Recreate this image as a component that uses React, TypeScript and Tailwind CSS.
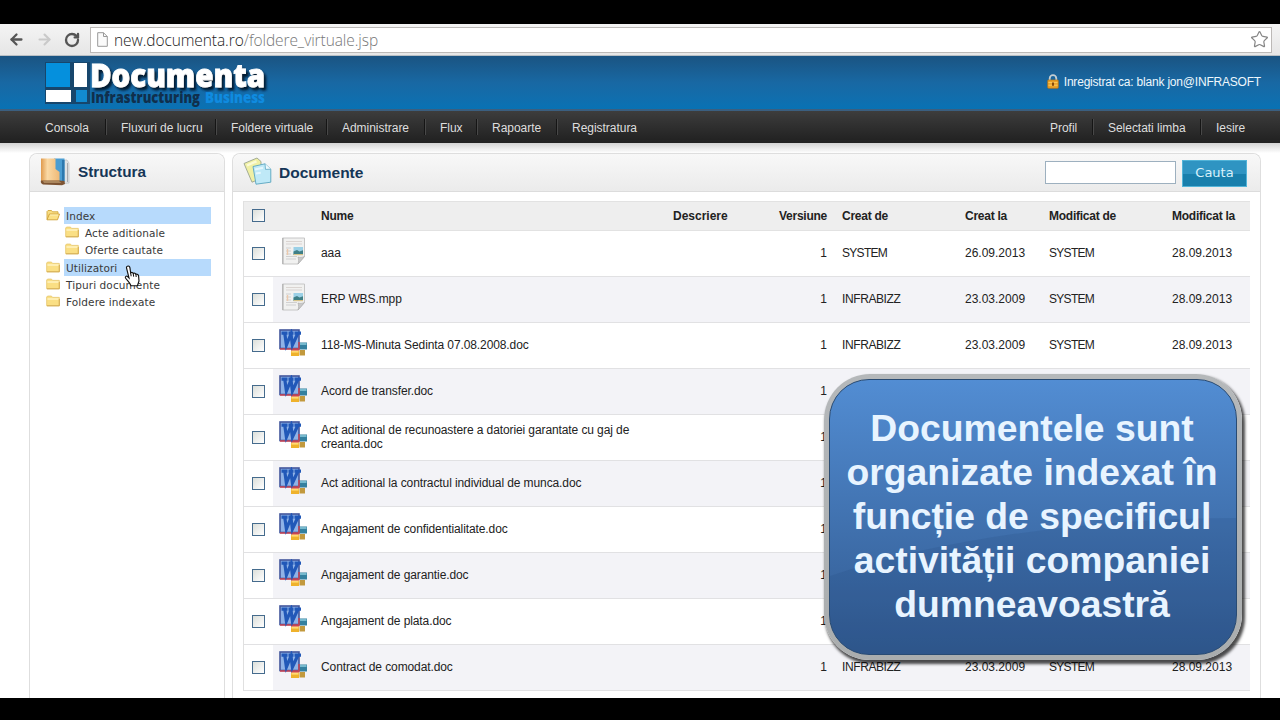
import { ArrowLeft, ArrowRight, RotateCw, Star } from 'lucide-react';

type Row = {
    name: string;
    type: 'page' | 'word';
    owner?: string;
    created?: string;
    modifiedBy?: string;
    modified?: string;
};

const rows: Row[] = [
    { name: 'aaa', type: 'page', owner: 'SYSTEM', created: '26.09.2013', modifiedBy: 'SYSTEM', modified: '28.09.2013' },
    { name: 'ERP WBS.mpp', type: 'page', owner: 'INFRABIZZ', created: '23.03.2009', modifiedBy: 'SYSTEM', modified: '28.09.2013' },
    { name: '118-MS-Minuta Sedinta 07.08.2008.doc', type: 'word', owner: 'INFRABIZZ', created: '23.03.2009', modifiedBy: 'SYSTEM', modified: '28.09.2013' },
    { name: 'Acord de transfer.doc', type: 'word' },
    { name: 'Act aditional de recunoastere a datoriei garantate cu gaj de creanta.doc', type: 'word' },
    { name: 'Act aditional la contractul individual de munca.doc', type: 'word' },
    { name: 'Angajament de confidentialitate.doc', type: 'word' },
    { name: 'Angajament de garantie.doc', type: 'word' },
    { name: 'Angajament de plata.doc', type: 'word' },
    { name: 'Contract de comodat.doc', type: 'word', owner: 'INFRABIZZ', created: '23.03.2009', modifiedBy: 'SYSTEM', modified: '28.09.2013' },
];

const tree = [
    { label: 'Index', open: true, active: true },
    { label: 'Acte aditionale', child: true },
    { label: 'Oferte cautate', child: true },
    { label: 'Utilizatori', active: true },
    { label: 'Tipuri documente' },
    { label: 'Foldere indexate' },
];

const menu = [
    { label: 'Consola', width: 'w-[76px]' },
    { label: 'Fluxuri de lucru', width: 'w-[110px]' },
    { label: 'Foldere virtuale', width: 'w-[111px]' },
    { label: 'Administrare', width: 'w-[98px]' },
    { label: 'Flux', width: 'w-[52px]' },
    { label: 'Rapoarte', width: 'w-[80px]' },
    { label: 'Registratura', width: 'w-[80px]' },
];

const userMenu = [
    { label: 'Profil', width: 'w-[58px]' },
    { label: 'Selectati limba', width: 'w-[108px]' },
    { label: 'Iesire', width: 'w-[45px]' },
];

const columns = 'grid grid-cols-[29px_48px_352px_90px_79px_123px_84px_123px_78px] items-center';

const Logo = () => (
    <svg width="232" height="54" viewBox="0 0 232 54" className="overflow-visible">
        <defs>
            <filter id="logo-shadow" x="-10%" y="-20%" width="125%" height="160%">
                <feDropShadow dx="2.5" dy="3" stdDeviation="1.3" floodColor="#06182b" floodOpacity="0.95" />
            </filter>
        </defs>
        <rect x="0" y="6" width="45" height="42" fill="#17466c" />
        <rect x="1" y="7" width="24" height="24" fill="#0590dd" />
        <rect x="29" y="7" width="13" height="24" fill="#fff" />
        <rect x="1" y="34" width="25" height="12" fill="#fff" />
        <rect x="31" y="34" width="11" height="12" fill="#128bd0" />
        <g fontFamily="'Open Sans', sans-serif" fontWeight="800">
            <text x="46" y="47" fontSize="15" fill="#102f4c" textLength="109" lengthAdjust="spacingAndGlyphs">Infrastructuring</text>
            <text x="160" y="47" fontSize="15" fill="#0f8be0" textLength="60" lengthAdjust="spacingAndGlyphs">Business</text>
            <text x="45" y="30.500" fontSize="31" fill="#fff" stroke="#fff" strokeWidth="0.8" textLength="175" lengthAdjust="spacingAndGlyphs" filter="url(#logo-shadow)">Documenta</text>
        </g>
    </svg>
);

const Lock = () => (
    <svg width="12" height="15" viewBox="0 0 12 15">
        <path d="M2.7 7V4.4a3.3 3.3 0 0 1 6.6 0V7" fill="none" stroke="#c3cdd2" strokeWidth="1.8" />
        <rect x="0.7" y="6" width="10.6" height="8.3" rx="0.8" fill="#e9a128" stroke="#b97413" strokeWidth="0.7" />
        <path d="M1.4 8.6h9.2M1.4 11.2h9.2" stroke="#ffd36b" strokeWidth="0.8" />
        <path d="M5.1 8.4h1.8v3.4H5.1z" fill="#7a3f08" />
    </svg>
);

const FolderIcon = ({ open }: { open?: boolean }) => (
    <svg width="14" height="12" viewBox="0 0 14 12" className="mb-0.5 shrink-0">
        {open ? (
            <>
                <path d="M1 10.5V2.5l1-1h3.5l1 1.3H12v2" fill="#f7dd83" stroke="#d3a73c" strokeWidth="0.9" />
                <path d="M1 10.8 3.4 5h10.1l-2 5.8z" fill="#fbe084" stroke="#cf9f35" strokeWidth="0.9" />
                <path d="M4 6h8.3" stroke="#fff6c9" strokeWidth="0.8" />
            </>
        ) : (
            <>
                <path d="M0.7 10.8V2l.8-.9h4l1 1.3h6.8v8.4z" fill="#fadf84" stroke="#e8cb74" strokeWidth="0.9" />
                <path d="M1.4 4h11.2" stroke="#fff5c6" strokeWidth="1.4" />
                <path d="M1 10.8h12.3V4" fill="none" stroke="#d3a84a" strokeWidth="0.9" />
            </>
        )}
    </svg>
);

const StructureIcon = () => (
    <svg width="30" height="30" viewBox="0 0 30 30">
        <defs>
            <linearGradient id="cover" x1="0" x2="1">
                <stop offset="0" stopColor="#e09a4c" />
                <stop offset="0.35" stopColor="#fad9a5" />
                <stop offset="1" stopColor="#efb976" />
            </linearGradient>
        </defs>
        <path d="M20 3h7l2 3v20l-9 1z" fill="#dfe3e6" stroke="#b5b9bc" strokeWidth="0.6" />
        <path d="M27.500 6v19" stroke="#9a9c9e" strokeWidth="0.8" />
        <path d="M14 1.500h10.500v23h-5l-5.500-1z" fill="#4a9dd2" />
        <path d="M22 3h2.500v21.500H22z" fill="#2c78ae" />
        <path d="M1 1.500h14.500V12l4 3v9H1z" fill="url(#cover)" />
        <path d="M1 23.500h18.500l5 .5.500 3-3 1.300L3 27.500c-2-.6-2.600-2.600-2-4z" fill="#7d5433" />
        <path d="M3 24.500h16l2.500 1H4z" fill="#d9b98a" />
    </svg>
);

const DocumentsIcon = () => (
    <svg width="29" height="28" viewBox="0 0 29 28">
        <path d="M1 6.5 14 1l4 3.500 0 17-9 3.700z" fill="#f0f0a4" stroke="#9aa48e" strokeWidth="0.9" />
        <path d="m4 8.500 9.500-4.200" stroke="#fbfbd7" strokeWidth="2.4" />
        <path d="M10 9.500 22 6.800l5.800 5.400v13l-14.800 2z" fill="#bfe9f7" stroke="#5aa5c0" strokeWidth="0.9" />
        <path d="m22 6.800.5 5.600 5.300-.2" fill="#eefafe" stroke="#5aa5c0" strokeWidth="0.8" />
        <path d="m12 12.500 8-1.800M12.800 16.500l5-.8" stroke="#e5f7fd" strokeWidth="2" />
    </svg>
);

const PageIcon = () => (
    <svg width="26" height="28" viewBox="0 0 26 28">
        <path d="M1.5 1h22v18.5L17 27H1.5z" fill="#f1f1f0" stroke="#c6c6c6" />
        <path d="M2 1v26" stroke="#acacac" strokeWidth="1" />
        <path d="M5 4.500h16M5 7h16" stroke="#dad4d1" strokeWidth="1.2" />
        <path d="M5 11h5m-5 3h5m-5 3h5m-5 5h10m-10-2.500h11" stroke="#d0d0d0" strokeWidth="1.1" />
        <path d="M6.500 12v6" stroke="#ecc9ac" strokeWidth="1.4" />
        <rect x="12.5" y="10" width="9.5" height="8" fill="#9bd0e6" />
        <path d="M12.5 14.5 16 13l2.5 1.4 3.5-1.2V18h-9.5z" fill="#3f7f86" />
        <path d="M12.500 17H22v1.200h-9.500z" fill="#d8c48a" />
        <path d="M17 27c.8-2.300.8-4.500 0-7 2 .7 4.300.4 6.500-.5z" fill="#c9c9c9" stroke="#a9a9a9" strokeWidth="0.6" />
    </svg>
);

const WordIcon = () => (
    <svg width="29" height="29" viewBox="0 0 29 29">
        <path d="M20 13.500h8v7h-8z" fill="#34809f" />
        <path d="M20.500 14h7v2h-7z" fill="#76b9ce" />
        <path d="M12 21.500h8V27h-8z" fill="#efb22c" />
        <path d="M20.500 21h5.500v5.500h-5.500z" fill="#c2993d" />
        <path d="M12.500 22h7v1.600h-7z" fill="#ffdb73" />
        <path d="M12 15h8v6.500h-8z" fill="#e0493e" />
        <rect x="1" y="1" width="19" height="18.500" fill="#8fb2e6" stroke="#42569c" strokeWidth="1.600" />
        <path d="M1 20h19V13" fill="none" stroke="#cc4350" strokeWidth="1.500" />
        <path d="M2.500 4.200h6M9.500 4.200h5M15.500 4.200h6.500M5.800 4.500l1.600 11.500 4.600-11 1.400 11 5.400-11.500" fill="none" stroke="#2158b8" strokeWidth="3.200" />
    </svg>
);

const Checkbox = () => (
    <span className="block size-[13px] border border-[#456b8d] bg-linear-to-br from-[#dcdfda] to-white" />
);

const MenuItem = ({ label, width, last }: { label: string; width: string; last: boolean }) => (
    <div className={`${width} flex h-4 shrink-0 items-center justify-between whitespace-nowrap`}>
        <span className="pt-px">{label}</span>
        {!last && <span className="mr-[14px] h-4 w-0.5 border-l border-[#151515] bg-[#484848]" />}
    </div>
);

const BrowserBar = () => (
    <div className="flex h-8 items-center border-b border-[#b9bfc4] bg-linear-to-b from-[#f4f4f4] to-[#e6e6e6]">
        <div className="flex w-[90px] items-center gap-[11px] pl-2">
            <ArrowLeft size={17} strokeWidth={3.2} color="#555" />
            <ArrowRight size={17} strokeWidth={3} color="#c9c9c9" />
            <RotateCw size={16} strokeWidth={3.5} color="#555" />
        </div>
        <div className="flex h-[26px] w-[1182px] items-center justify-between border border-[#bcb9b7] bg-white pr-0.5 pl-1.5">
            <div className="flex items-center gap-1.5">
                <svg width="11" height="15" viewBox="0 0 11 15">
                    <path d="M.7.700h5.800l3.800 3.800v9.800H.7zM6.500.7v3.800h3.800" fill="#fafafa" stroke="#999" strokeWidth="1" />
                </svg>
                <p className="font-['Open_Sans',sans-serif] text-[15.5px] leading-5 font-light tracking-[-0.08px] whitespace-nowrap text-[#222]">
                    new.documenta.ro<span className="text-[#777]">/foldere_virtuale.jsp</span>
                </p>
            </div>
            <Star size={19} strokeWidth={1.5} color="#858585" />
        </div>
    </div>
);

const Header = () => (
    <header>
        <div className="flex h-[55px] items-start justify-between border-b-2 border-[#3b5f80] bg-linear-to-b from-[#1a5482] via-[#1868a3] to-[#0872b4] pl-[45px]">
            <Logo />
            <div className="flex items-center gap-[5px] pt-[18px] pr-[19px] text-xs tracking-[-0.2px] whitespace-nowrap text-[#eef7fc]">
                <span className="-mt-0.5"><Lock /></span>
                Inregistrat ca: blank jon@INFRASOFT
            </div>
        </div>
        <nav className="flex h-8 items-center justify-between bg-linear-to-b from-[#3d3d3d] to-[#202020] pr-[19px] pl-[45px] text-xs tracking-[-0.03px] text-[#dedede]">
            <div className="flex">
                {menu.map((item, i) => (
                    <MenuItem key={item.label} {...item} last={i === menu.length - 1} />
                ))}
            </div>
            <div className="flex">
                {userMenu.map((item, i) => (
                    <MenuItem key={item.label} {...item} last={i === userMenu.length - 1} />
                ))}
            </div>
        </nav>
    </header>
);

const Sidebar = () => (
    <aside className="w-[196px] rounded-t-lg border border-b-0 border-[#dedede] bg-white">
        <div className="flex h-[38px] items-center gap-2 rounded-t-lg border-b border-[#dcdcdc] bg-linear-to-b from-[#f8f8f8] to-[#ebebeb] pl-2.5">
            <span className="-mt-px"><StructureIcon /></span>
            <h2 className="text-[15.3px] font-bold text-[#153657]">Structura</h2>
        </div>
        <ul className="pt-[15px] pr-[13px] pl-4 font-['DejaVu_Sans',sans-serif] text-[10.5px] text-[#3a3a3a]">
            {tree.map((node) => (
                <li key={node.label} className={`flex h-[17.3px] items-center gap-1 ${node.child ? 'pl-[19px]' : ''}`}>
                    <FolderIcon open={node.open} />
                    <span className={`flex h-full flex-1 items-center pt-0.5 pl-0.5 tracking-[0.1px] whitespace-nowrap ${node.active ? 'bg-[#b7dafc]' : ''}`}>
                        {node.label}
                    </span>
                </li>
            ))}
        </ul>
    </aside>
);

const DocumentTable = () => (
    <div className="mt-[9px] ml-[10px] w-[1007px] border-l border-[#e0e0e0] text-xs text-[#222]">
        <div className={`${columns} h-[30px] border-y border-[#e2e2e2] bg-[#eeeeee] font-bold tracking-[-0.25px]`}>
            <span className="-mt-0.5 pl-2"><Checkbox /></span>
            <span />
            <span>Nume</span>
            <span className="tracking-normal">Descriere</span>
            <span className="pl-4">Versiune</span>
            <span>Creat de</span>
            <span>Creat la</span>
            <span>Modificat de</span>
            <span>Modificat la</span>
        </div>
        {rows.map((row, i) => (
            <div key={row.name} className={`${columns} h-[46px] border-b border-[#e1e1e3] ${i % 2 ? 'bg-[#f3f3f7]' : 'bg-white'}`}>
                <span className="flex h-full items-center bg-white pb-px pl-2"><Checkbox /></span>
                <span className="-mt-1 pl-1.5">
                    {row.type === 'page' ? <span className="-mt-0.5 block pl-0.5"><PageIcon /></span> : <WordIcon />}
                </span>
                <span className="pr-9 pb-0.5 leading-[14px] tracking-[-0.1px]">{row.name}</span>
                <span />
                <span className="pr-[15px] pb-0.5 text-right">1</span>
                <span className={`pb-0.5 ${row.owner === 'SYSTEM' ? 'tracking-[-0.7px]' : 'tracking-[-0.4px]'}`}>{row.owner}</span>
                <span className="pb-0.5">{row.created}</span>
                <span className="pb-0.5 tracking-[-0.7px]">{row.modifiedBy}</span>
                <span className="pb-0.5">{row.modified}</span>
            </div>
        ))}
    </div>
);

const Documents = () => (
    <main className="w-[1029px] rounded-t-lg border border-b-0 border-[#dedede] bg-white">
        <div className="flex h-[38px] items-center justify-between rounded-t-lg border-b border-[#dcdcdc] bg-linear-to-b from-[#f8f8f8] to-[#ebebeb] pr-[13px] pl-2.5">
            <div className="flex items-center gap-[7px]">
                <span className="-mt-1"><DocumentsIcon /></span>
                <h2 className="text-[15.5px] font-bold text-[#153657]">Documente</h2>
            </div>
            <div className="flex items-center gap-1.5">
                <input className="h-[23px] w-[131px] border border-[#9db0bf] bg-white" />
                <button className="mt-px h-[27px] w-[65px] border border-[#52b4d8] bg-linear-to-b from-[#2f94c2] from-50% to-[#187fac] to-50% font-['DejaVu_Sans',sans-serif] text-[13px] text-[#d9f2fb]">
                    Cauta
                </button>
            </div>
        </div>
        <DocumentTable />
    </main>
);

const Cursor = () => (
    <svg width="18" height="23" viewBox="0 0 17 22" className="absolute top-[265px] left-[123px]">
        <path
            d="M4 1.200c1.300-.7 2.300.2 2.500 1.300l.7 5c1.100-.8 2.200-.3 2.500.6 1-.6 2.200-.2 2.500.8 1.200-.5 2.500.2 2.600 1.500l.4 4.800-1.500 4.600H7.500c-1-3-3.200-4.600-5.200-7.400-.7-1.300.9-2.300 2-1.300l1.300 1.300L3.200 2.600c0-.7.300-1.200.8-1.400z"
            fill="#fff"
            stroke="#111"
            strokeWidth="1.100"
        />
        <path d="m7.200 7.500.5 3.300m2-2.700.4 3m2.100-2.200.3 2.600" stroke="#111" strokeWidth="1" />
    </svg>
);

const Callout = () => (
    <div className="absolute top-[374px] left-[824px] h-[286px] w-[418px] rounded-[46px] bg-linear-to-b from-[#b5b8ba] to-[#aaadae] p-[5px] shadow-[2px_3px_3px_1px_rgba(0,0,0,0.7)]">
        <div className="relative h-full overflow-hidden rounded-[40px] border border-[#294b73] bg-linear-to-b from-[#528dd3] to-[#31598f]">
            <svg width="406" height="274" viewBox="0 0 406 274" className="absolute inset-0">
                <path d="M0 196C120 155 280 138 406 138V274H0z" fill="#1e416f" opacity="0.14" />
            </svg>
            <p className="relative pt-[26px] pr-0.5 text-center text-[37.3px] leading-[44px] font-bold whitespace-nowrap text-[#e8f4ff]">
                Documentele sunt
                <br />
                organizate indexat în
                <br />
                funcție de specificul
                <br />
                activității companiei
                <br />
                dumneavoastră
            </p>
        </div>
    </div>
);

export default function App() {
    return (
        <div className="h-[720px] w-[1280px] overflow-hidden bg-black py-6 font-['Liberation_Sans',Arial,sans-serif]">
            <div className="h-[674px] overflow-hidden bg-white">
                <BrowserBar />
                <Header />
                <div className="flex h-[555px] gap-[7px] bg-linear-to-b from-[#d2d2d2] to-white to-[10px] pt-[10px] pl-[29px]">
                    <Sidebar />
                    <Documents />
                </div>
            </div>
            <Cursor />
            <Callout />
        </div>
    );
}
